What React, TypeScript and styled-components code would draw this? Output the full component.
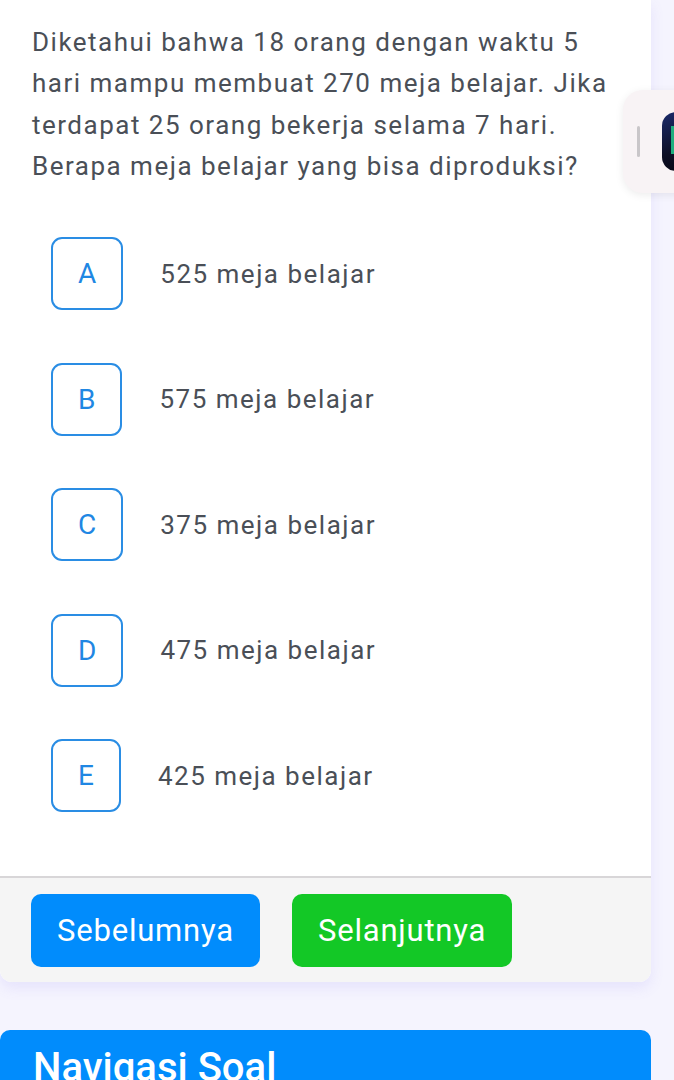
import React from "react";
import styled, { createGlobalStyle } from "styled-components";

const Global = createGlobalStyle`
  html, body { margin: 0; padding: 0; background: #f5f4fe; }
  body { font-family: Roboto, "Noto Sans", Arial, sans-serif; overflow: hidden; }
  * { box-sizing: border-box; }
`;

const Page = styled.div`
  width: 674px;
  height: 1080px;
  overflow: hidden;
  position: relative;
  background: #f5f4fe;
`;

const Card = styled.div`
  width: 651px;
  background: #ffffff;
  border-radius: 0 0 12px 12px;
  box-shadow: 0 6px 14px rgba(120, 110, 240, 0.12);
  overflow: hidden;
`;

const Body = styled.div`
  padding: 22px 30px 64px 32px;
`;

const Question = styled.p`
  margin: 0;
  font-size: 26px;
  line-height: 41.3px;
  letter-spacing: 1.5px;
  color: #4a4f57;
`;

const Options = styled.div`
  margin-top: 50px;
  display: flex;
  flex-direction: column;
  gap: 52.5px;
  padding-left: 19px;
`;

const Option = styled.div`
  display: flex;
  align-items: center;
  gap: 37px;
`;

const Letter = styled.div`
  height: 73px;
  padding: 0 25px;
  border: 2px solid #2a8de4;
  border-radius: 11px;
  display: flex;
  align-items: center;
  justify-content: center;
  font-size: 28px;
  color: #1f87e3;
`;

const OptionText = styled.span`
  font-size: 26px;
  letter-spacing: 1.5px;
  color: #4a4f57;
`;

const Footer = styled.div`
  border-top: 2px solid #d8d6d8;
  background: #f5f5f5;
  padding: 16px 31px 15px 31px;
  display: flex;
  gap: 32px;
`;

const Button = styled.button<{ $tone: "blue" | "green" }>`
  height: 73px;
  border: none;
  border-radius: 10px;
  padding: 0 26px;
  background: ${(p) => (p.$tone === "blue" ? "#018cfc" : "#13c826")};
  color: #ffffff;
  font-family: Roboto, "Noto Sans", Arial, sans-serif;
  font-size: 31px;
  letter-spacing: 0.8px;
  font-weight: 400;
  display: flex;
  align-items: center;
  justify-content: center;
`;

const NavCard = styled.div`
  margin-top: 48px;
  width: 651px;
  height: 120px;
  background: #018cfc;
  border-radius: 10px;
  padding: 14px 33px;
`;

const NavTitle = styled.h2`
  margin: 0;
  font-size: 40px;
  font-weight: 500;
  color: #ffffff;
  line-height: 48px;
`;

const Bubble = styled.div`
  position: absolute;
  left: 623px;
  top: 90px;
  width: 80px;
  height: 103px;
  background: #f8f3f5;
  border-radius: 20px;
  box-shadow: 0 2px 8px rgba(0, 0, 0, 0.08);
  display: flex;
  align-items: center;
  padding-left: 14px;
  gap: 22px;
`;

const Handle = styled.div`
  width: 5px;
  height: 31px;
  border-radius: 3px;
  background: #c9c6c9;
`;

const AppIcon = styled.div`
  width: 58px;
  height: 59px;
  border-radius: 14px;
  background: linear-gradient(160deg, #1b2a6b 0%, #0d0f25 60%, #050510 100%);
  position: relative;
  overflow: hidden;
  &::after {
    content: "";
    position: absolute;
    left: 9px;
    top: 14px;
    width: 6px;
    height: 28px;
    background: #1fae7e;
  }
`;

const options = [
  { l: "A", t: "525 meja belajar" },
  { l: "B", t: "575 meja belajar" },
  { l: "C", t: "375 meja belajar" },
  { l: "D", t: "475 meja belajar" },
  { l: "E", t: "425 meja belajar" },
];

export default function App() {
  return (
    <Page>
      <Global />
      <Card>
        <Body>
          <Question>
            Diketahui bahwa 18 orang dengan waktu 5 hari mampu membuat 270 meja belajar. Jika
            terdapat 25 orang bekerja selama 7 hari. Berapa meja belajar yang bisa diproduksi?
          </Question>
          <Options>
            {options.map((o) => (
              <Option key={o.l}>
                <Letter>{o.l}</Letter>
                <OptionText>{o.t}</OptionText>
              </Option>
            ))}
          </Options>
        </Body>
        <Footer>
          <Button $tone="blue">Sebelumnya</Button>
          <Button $tone="green">Selanjutnya</Button>
        </Footer>
      </Card>
      <NavCard>
        <NavTitle>Navigasi Soal</NavTitle>
      </NavCard>
      <Bubble>
        <Handle />
        <AppIcon />
      </Bubble>
    </Page>
  );
}
